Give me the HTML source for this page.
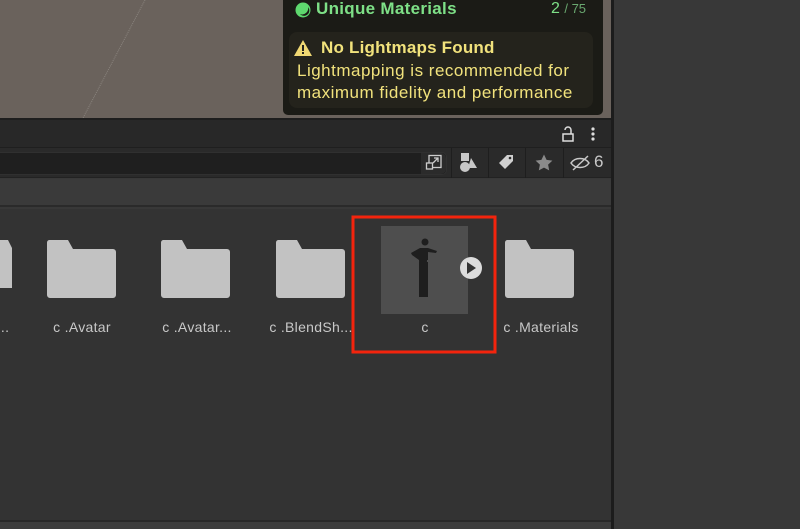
<!DOCTYPE html>
<html><head><style>
body{margin:0;width:800px;height:529px;position:relative;overflow:hidden;background:#383838;font-family:"Liberation Sans",sans-serif}
div{position:absolute;box-sizing:border-box}
.lbl{color:#c8c8c8;font-size:14px;text-align:center;width:100px;letter-spacing:0.3px}
</style></head><body>
<div style="left:0;top:0;width:611px;height:118px;background:#6a625c"></div>
<svg style="position:absolute;left:0;top:0" width="611" height="118"><line x1="145" y1="0" x2="83" y2="118" stroke="#8a847e" stroke-width="1" stroke-dasharray="1,1"/></svg>
<div style="left:283px;top:-8px;width:320px;height:123px;background:#1b1b16;border-radius:5px"></div>
<svg style="position:absolute;left:294px;top:1px" width="18" height="18"><circle cx="9" cy="9" r="7.5" fill="#5ed86e"/><path d="M6 13 A6 6 0 0 0 14 6 A5 5 0 0 1 6 13Z" fill="#1b1b16"/></svg>
<div style="left:316px;top:-1px;color:#7ee087;font-size:17px;font-weight:bold;letter-spacing:0.3px">Unique Materials</div>
<div style="left:551px;top:0;color:#7ee087;font-size:16px">2 <span style="color:#6aa870;font-size:13px">/ 75</span></div>
<div style="left:289px;top:32px;width:304px;height:76px;background:#24231c;border-radius:8px"></div>
<svg style="position:absolute;left:293px;top:39px" width="20" height="18"><path d="M10 1 L19 17 L1 17Z" fill="#f0d873"/><rect x="9" y="6" width="2" height="6" fill="#24231c"/><rect x="9" y="13" width="2" height="2" fill="#24231c"/></svg>
<div style="left:321px;top:38px;color:#f1e27c;font-size:17px;font-weight:bold;letter-spacing:0.2px">No Lightmaps Found</div>
<div style="left:297px;top:60px;color:#f1e27c;font-size:17px;line-height:22px;letter-spacing:0.5px">Lightmapping is recommended for<br>maximum fidelity and performance</div>
<div style="left:0;top:118px;width:611px;height:2px;background:#1e1e1e"></div>
<div style="left:0;top:120px;width:611px;height:28px;background:#282828;border-bottom:1px solid #1f1f1f"></div>
<svg style="position:absolute;left:560px;top:125px" width="40" height="18"><path d="M3 9h10v7H3z M11 9V5a3 3 0 0 0-6 0" fill="none" stroke="#ddd" stroke-width="1.5"/><circle cx="33" cy="4" r="1.6" fill="#ddd"/><circle cx="33" cy="9" r="1.6" fill="#ddd"/><circle cx="33" cy="14" r="1.6" fill="#ddd"/></svg>
<div style="left:0;top:148px;width:611px;height:30px;background:#2a2a2a;border-bottom:1px solid #222"></div>
<div style="left:-10px;top:152px;width:457px;height:23px;background:#1f1f1f;border-radius:5px;border:1px solid #303030"></div>
<div style="left:421px;top:153px;width:25px;height:21px;background:#2b2b2b;border-radius:0 5px 5px 0"></div>
<svg style="position:absolute;left:425px;top:154px" width="18" height="18"><rect x="4" y="1.5" width="12" height="12" fill="none" stroke="#ccc" stroke-width="1.3"/><rect x="1.5" y="9" width="6" height="6" fill="#2b2b2b" stroke="#ccc" stroke-width="1.3"/><path d="M8 9l5-5M9 4h4v4" fill="none" stroke="#ccc" stroke-width="1.3"/></svg>
<div style="left:451px;top:148px;width:1px;height:30px;background:#1e1e1e"></div>
<div style="left:488px;top:148px;width:1px;height:30px;background:#1e1e1e"></div>
<div style="left:525px;top:148px;width:1px;height:30px;background:#1e1e1e"></div>
<div style="left:563px;top:148px;width:1px;height:30px;background:#1e1e1e"></div>
<svg style="position:absolute;left:458px;top:151px" width="24" height="24"><rect x="3" y="2" width="8" height="8" fill="#c8c8c8"/><circle cx="7" cy="16" r="5" fill="#c8c8c8"/><path d="M13 7l6 10h-9z" fill="#c8c8c8"/></svg>
<svg style="position:absolute;left:496px;top:153px" width="20" height="20"><path d="M11 2h6v6l-8 8-6-6z" fill="#d0d0d0"/><circle cx="14" cy="5" r="1.3" fill="#2a2a2a"/></svg>
<svg style="position:absolute;left:534px;top:153px" width="20" height="20"><path d="M10 1.5l2.6 5.4 5.8.7-4.3 4 1.1 5.8L10 14.6l-5.2 2.8 1.1-5.8-4.3-4 5.8-.7z" fill="#8a8a8a"/></svg>
<svg style="position:absolute;left:569px;top:154px" width="26" height="18"><path d="M2 9c4-6 14-6 18 0c-4 6-14 6-18 0z" fill="none" stroke="#c8c8c8" stroke-width="1.5"/><path d="M4 16L19 2" stroke="#c8c8c8" stroke-width="1.5"/></svg>
<div style="left:594px;top:152px;color:#c8c8c8;font-size:17px">6</div>
<div style="left:0;top:179px;width:611px;height:28px;background:#3a3a3a;border-bottom:2px solid #2a2a2a"></div>
<div style="left:0;top:209px;width:611px;height:311px;background:#333"></div>
<div style="left:611px;top:0;width:3px;height:529px;background:#1c1c1c"></div>
<div style="left:0;top:520px;width:611px;height:9px;background:#3c3c3c;border-top:2px solid #282828"></div>

<svg style="position:absolute;left:0;top:0" width="611" height="529">
<g fill="#c2c2c2">
<path d="M-12 240h20l4 8h0v40h-24z" />
<path d="M49 240h19l5 9h40a3 3 0 0 1 3 3v43a3 3 0 0 1-3 3H50a3 3 0 0 1-3-3V243a3 3 0 0 1 2-3z"/>
<path d="M163 240h19l5 9h40a3 3 0 0 1 3 3v43a3 3 0 0 1-3 3H164a3 3 0 0 1-3-3V243a3 3 0 0 1 2-3z"/>
<path d="M278 240h19l5 9h40a3 3 0 0 1 3 3v43a3 3 0 0 1-3 3H279a3 3 0 0 1-3-3V243a3 3 0 0 1 2-3z"/>
<path d="M507 240h19l5 9h40a3 3 0 0 1 3 3v43a3 3 0 0 1-3 3H508a3 3 0 0 1-3-3V243a3 3 0 0 1 2-3z"/>
</g>
<rect x="381" y="226" width="87" height="88" fill="#4e4e4e"/>
<g fill="#1e1e1e"><circle cx="425" cy="242" r="3.5"/><path d="M411 253l9-5h8l9 3-1 2-8-1v8l-1 0-1 36h-6l-1-36-7-5z"/><rect x="419" y="262" width="9" height="35"/></g>
<circle cx="471" cy="268" r="11" fill="#dcdcdc"/><path d="M467 262l9 6-9 6z" fill="#333"/>
<rect x="353" y="217" width="142" height="135" fill="none" stroke="#f3240d" stroke-width="3"/>
</svg>
<div class="lbl" style="left:-47px;top:319px">...</div>
<div class="lbl" style="left:32px;top:319px">c .Avatar</div>
<div class="lbl" style="left:147px;top:319px">c .Avatar...</div>
<div class="lbl" style="left:261px;top:319px">c .BlendSh...</div>
<div class="lbl" style="left:375px;top:319px">c</div>
<div class="lbl" style="left:491px;top:319px">c .Materials</div>
</body></html>
